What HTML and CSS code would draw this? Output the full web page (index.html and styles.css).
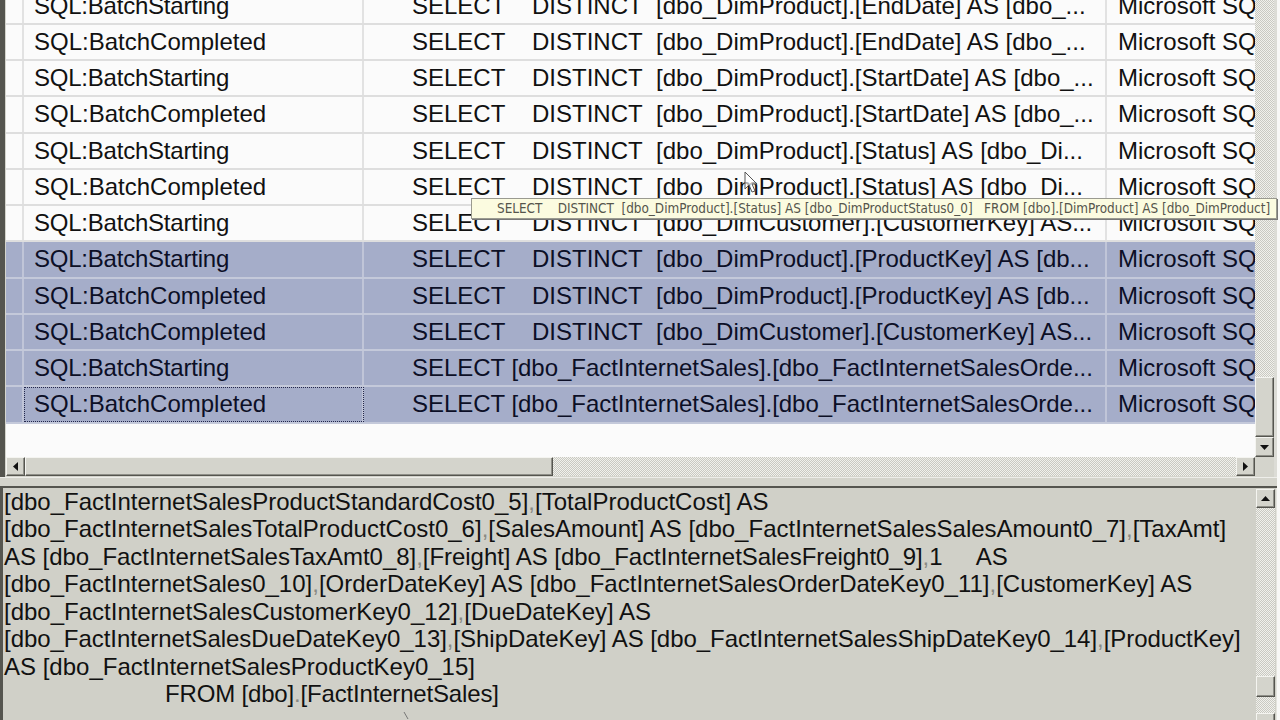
FILE: index.html
```html
<!DOCTYPE html>
<html lang="en">
<head>
<meta charset="utf-8">
<title>SQL Server Profiler</title>
<link rel="stylesheet" href="styles.css">
</head>
<body>
<div class="app">
  <section class="top-pane">
    <div class="grid-area">
      <div class="viewport">
        <div class="rows">
          <div class="row"><span class="c0"></span><span class="c1 start">SQL:BatchStarting</span><span class="c2">SELECT&nbsp;&nbsp;&nbsp;&nbsp;DISTINCT&nbsp;&nbsp;[dbo_DimProduct].[EndDate] AS [dbo_...</span><span class="c3">Microsoft SQL Server</span></div>
          <div class="row"><span class="c0"></span><span class="c1">SQL:BatchCompleted</span><span class="c2">SELECT&nbsp;&nbsp;&nbsp;&nbsp;DISTINCT&nbsp;&nbsp;[dbo_DimProduct].[EndDate] AS [dbo_...</span><span class="c3">Microsoft SQL Server</span></div>
          <div class="row"><span class="c0"></span><span class="c1 start">SQL:BatchStarting</span><span class="c2">SELECT&nbsp;&nbsp;&nbsp;&nbsp;DISTINCT&nbsp;&nbsp;[dbo_DimProduct].[StartDate] AS [dbo_...</span><span class="c3">Microsoft SQL Server</span></div>
          <div class="row"><span class="c0"></span><span class="c1">SQL:BatchCompleted</span><span class="c2">SELECT&nbsp;&nbsp;&nbsp;&nbsp;DISTINCT&nbsp;&nbsp;[dbo_DimProduct].[StartDate] AS [dbo_...</span><span class="c3">Microsoft SQL Server</span></div>
          <div class="row"><span class="c0"></span><span class="c1 start">SQL:BatchStarting</span><span class="c2">SELECT&nbsp;&nbsp;&nbsp;&nbsp;DISTINCT&nbsp;&nbsp;[dbo_DimProduct].[Status] AS [dbo_Di...</span><span class="c3">Microsoft SQL Server</span></div>
          <div class="row"><span class="c0"></span><span class="c1">SQL:BatchCompleted</span><span class="c2">SELECT&nbsp;&nbsp;&nbsp;&nbsp;DISTINCT&nbsp;&nbsp;[dbo_DimProduct].[Status] AS [dbo_Di...</span><span class="c3">Microsoft SQL Server</span></div>
          <div class="row"><span class="c0"></span><span class="c1 start">SQL:BatchStarting</span><span class="c2">SELECT&nbsp;&nbsp;&nbsp;&nbsp;DISTINCT&nbsp;&nbsp;[dbo_DimCustomer].[CustomerKey] AS...</span><span class="c3">Microsoft SQL Server</span></div>
          <div class="row sel"><span class="c0"></span><span class="c1 start">SQL:BatchStarting</span><span class="c2">SELECT&nbsp;&nbsp;&nbsp;&nbsp;DISTINCT&nbsp;&nbsp;[dbo_DimProduct].[ProductKey] AS [db...</span><span class="c3">Microsoft SQL Server</span></div>
          <div class="row sel"><span class="c0"></span><span class="c1">SQL:BatchCompleted</span><span class="c2">SELECT&nbsp;&nbsp;&nbsp;&nbsp;DISTINCT&nbsp;&nbsp;[dbo_DimProduct].[ProductKey] AS [db...</span><span class="c3">Microsoft SQL Server</span></div>
          <div class="row sel"><span class="c0"></span><span class="c1">SQL:BatchCompleted</span><span class="c2">SELECT&nbsp;&nbsp;&nbsp;&nbsp;DISTINCT&nbsp;&nbsp;[dbo_DimCustomer].[CustomerKey] AS...</span><span class="c3">Microsoft SQL Server</span></div>
          <div class="row sel"><span class="c0"></span><span class="c1 start">SQL:BatchStarting</span><span class="c2 fact">SELECT [dbo_FactInternetSales].[dbo_FactInternetSalesOrde...</span><span class="c3">Microsoft SQL Server</span></div>
          <div class="row sel"><span class="c0"></span><span class="c1 focus">SQL:BatchCompleted</span><span class="c2 fact">SELECT [dbo_FactInternetSales].[dbo_FactInternetSalesOrde...</span><span class="c3">Microsoft SQL Server</span></div>
        </div>
      </div>
      <div class="vscroll">
        <div class="track"></div>
        <div class="thumb vthumb"></div>
        <div class="btn"><svg width="9" height="5" viewBox="0 0 9 5"><path d="M0 0h9L4.500 5z" fill="#111"/></svg></div>
      </div>
    </div>
    <div class="hscroll">
      <div class="btn hbtn"><svg width="5" height="9" viewBox="0 0 5 9"><path d="M5 0v9L0 4.500z" fill="#111"/></svg></div>
      <div class="thumb hthumb"></div>
      <div class="track"></div>
      <div class="btn hbtn"><svg width="5" height="9" viewBox="0 0 5 9"><path d="M0 0v9l5-4.500z" fill="#111"/></svg></div>
      <div class="corner"></div>
    </div>
  </section>
  <div class="splitter"></div>
  <section class="bottom-pane">
    <div class="sql-text">
      <div>[dbo_FactInternetSalesProductStandardCost0_5]<i>,</i>[TotalProductCost] AS</div>
      <div>[dbo_FactInternetSalesTotalProductCost0_6]<i>,</i>[SalesAmount] AS [dbo_FactInternetSalesSalesAmount0_7]<i>,</i>[TaxAmt]</div>
      <div class="tight">AS [dbo_FactInternetSalesTaxAmt0_8]<i>,</i>[Freight] AS [dbo_FactInternetSalesFreight0_9]<i>,</i>1 &nbsp;&nbsp;&nbsp;&nbsp;AS</div>
      <div>[dbo_FactInternetSales0_10]<i>,</i>[OrderDateKey] AS [dbo_FactInternetSalesOrderDateKey0_11]<i>,</i>[CustomerKey] AS</div>
      <div>[dbo_FactInternetSalesCustomerKey0_12]<i>,</i>[DueDateKey] AS</div>
      <div class="tight">[dbo_FactInternetSalesDueDateKey0_13]<i>,</i>[ShipDateKey] AS [dbo_FactInternetSalesShipDateKey0_14]<i>,</i>[ProductKey]</div>
      <div>AS [dbo_FactInternetSalesProductKey0_15]</div>
      <div class="from">FROM [dbo]<i>.</i>[FactInternetSales]</div>
    </div>
    <div class="vscroll text-scroll">
      <div class="btn"><svg width="9" height="5" viewBox="0 0 9 5"><path d="M0 5h9L4.500 0z" fill="#111"/></svg></div>
      <div class="track"></div>
      <div class="thumb text-thumb"></div>
      <div class="track short"></div>
      <div class="btn cut"><svg width="9" height="5" viewBox="0 0 9 5"><path d="M0 0h9L4.500 5z" fill="#111"/></svg></div>
    </div>
  </section>
  <div class="tooltip">SELECT&nbsp;&nbsp;&nbsp;&nbsp;DISTINCT&nbsp;&nbsp;[dbo_DimProduct].[Status] AS [dbo_DimProductStatus0_0]&nbsp;&nbsp;&nbsp;FROM [dbo].[DimProduct] AS [dbo_DimProduct]</div>
  <svg class="cursor" width="14" height="24" viewBox="0 0 14 24"><path d="M1 1v17l4-4 3 7 3-1-3-7h5z" fill="#fff" fill-opacity=".65" stroke="#555" stroke-width="1"/></svg>
  <svg class="cursor-mark" width="8" height="8" viewBox="0 0 8 8"><path d="M1 0l4 7" stroke="#777" stroke-width="1" fill="none"/></svg>
</div>
</body>
</html>
```
FILE: styles.css
```css
* { box-sizing: border-box; }
html, body { margin: 0; height: 100%; overflow: hidden; background: #f8f8f6; }
.app {
  position: relative;
  width: 1280px;
  height: 720px;
  overflow: hidden;
  display: flex;
  flex-direction: column;
  font-family: "Liberation Sans", Arial, sans-serif;
  font-size: 24px;
  color: #111;
}
.top-pane {
  height: 477px;
  width: 1277px;
  flex: none;
  display: flex;
  flex-direction: column;
  background: #d4d4cc;
  border-left: 5px solid #55554f;
  border-right: 3px solid #dcdcd6;
}
.grid-area { height: 457px; flex: none; display: flex; }
.viewport { flex: 1; min-width: 0; overflow: hidden; background: #fbfbfb; margin-left: 1px; }
.rows { margin-top: -11.300px; }
.row {
  display: flex;
  height: 36.250px;
  border-bottom: 2px solid #dedede;
  line-height: 33px;
  white-space: nowrap;
}
.row span { overflow: hidden; flex: none; padding-left: 10px; border-right: 2px solid #e2e2e2; }
.row .c0 { width: 18px; padding: 0; }
.row .c1 { width: 340px; }
.row .start { letter-spacing: -0.220px; }
.row .c2 { width: 743px; padding-left: 48px; }
.row .c2.fact { letter-spacing: -0.030px; }
.row .c3 { width: 148px; padding-left: 11px; border-right: 0; }
.sel { background: #a5adc9; border-bottom-color: #c4c9da; color: #0c0f26; }
.sel span { border-right-color: #c0c5d8; }
.row .focus { outline: 1px dotted #22264a; outline-offset: -1px; }
.vscroll { width: 19px; flex: none; display: flex; flex-direction: column; background: #d4d4cc; }
.track {
  flex: 1;
  min-height: 0;
  background-color: #f1f1ec;
  background-image: conic-gradient(#c9c9c2 25%, transparent 0 50%, #c9c9c2 0 75%, transparent 0);
  background-size: 2px 2px;
}
.vthumb { height: 60px; flex: none; }
.thumb, .btn {
  background: #d4d4cc;
  border: 1px solid #d4d4cc;
  border-top-color: #f4f4f0;
  border-left-color: #f4f4f0;
  border-right-color: #55554f;
  border-bottom-color: #55554f;
  box-shadow: inset -1px -1px 0 #8f8f88;
}
.btn { height: 20px; flex: none; display: flex; align-items: center; justify-content: center; }
.hscroll { height: 19px; flex: none; display: flex; margin-left: 1px; }
.hbtn { width: 19px; height: 19px; }
.hthumb { width: 528px; flex: none; }
.corner { width: 19px; flex: none; background: #d4d4cc; }
.splitter {
  height: 11px;
  width: 1277px;
  flex: none;
  background: #d4d4cc;
  border-top: 1px solid #eeeeea;
  border-bottom: 2px solid #55554f;
}
.bottom-pane { flex: 1; min-height: 0; display: flex; background: #d0d0c8; border-left: 3px solid #55554f; border-right: 1px solid #e4e4de; width: 1277px; }
.sql-text { flex: 1; min-width: 0; padding: 0 0 0 1px; margin-top: -0.500px; }
.sql-text div { height: 27.500px; line-height: 27.500px; white-space: nowrap; }
.sql-text .tight { letter-spacing: -0.040px; }
.sql-text i { font-style: normal; color: #8a8a84; }
.sql-text .from { padding-left: 161px; letter-spacing: -0.170px; }
.text-scroll { width: 19px; margin-top: 1px; margin-right: 1px; }
.text-scroll .btn { height: 19px; }
.text-thumb { height: 21px; flex: none; }
.text-scroll .track.short { flex: 0 0 16px; }
.text-scroll .cut { height: 20px; margin-bottom: -13px; }
.tooltip {
  position: absolute;
  left: 471px;
  top: 198px;
  width: 806px;
  height: 21px;
  padding-left: 25px;
  background: #fbfbe0;
  border: 1px solid #9a9a90;
  box-shadow: 1px 1px 0 #777;
  font-family: "DejaVu Sans", sans-serif;
  font-stretch: condensed;
  font-size: 13.400px;
  line-height: 19px;
  color: #55554c;
  white-space: nowrap;
  overflow: hidden;
}
.cursor { position: absolute; left: 744px; top: 171px; }
.cursor-mark { position: absolute; left: 403px; top: 712px; }
```
